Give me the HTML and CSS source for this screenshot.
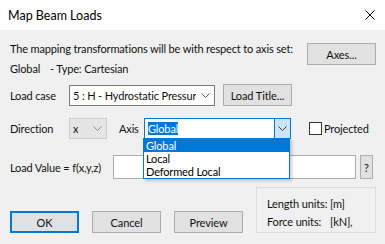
FILE: index.html
```html
<!DOCTYPE html>
<html>
<head>
<meta charset="utf-8">
<link rel="stylesheet" href="styles.css">
</head>
<body>
<div class="dialog">
  <div class="titlebar">
    <span class="title">Map Beam Loads</span>
    <svg class="close" width="10" height="10" viewBox="0 0 10 10"><path d="M0.5 0.5 L9.5 9.5 M9.5 0.5 L0.5 9.5" stroke="#000" stroke-width="1" fill="none"/></svg>
  </div>
  <div class="content">
    <div class="axis-row">
      <div class="axis-text">
        <div>The mapping transformations will be with respect to axis set:</div>
        <div><span class="gl">Global</span>- Type: Cartesian</div>
      </div>
      <button class="btn axes">Axes...</button>
    </div>
    <div class="row lc-row">
      <span class="label lbl-w">Load case</span>
      <div class="combo lc-combo">
        <span class="combo-text">5 : H - Hydrostatic Pressur</span>
        <svg class="chev" width="9" height="5" viewBox="0 0 9 5"><polyline points="0.5,0.5 4.5,4.5 8.5,0.5" fill="none" stroke="#606060" stroke-width="1"/></svg>
      </div>
      <button class="btn title-btn">Load Title...</button>
    </div>
    <div class="row dir-row">
      <span class="label lbl-w">Direction</span>
      <div class="combo dir-combo">
        <span class="combo-text">x</span>
        <svg class="chev" width="9" height="5" viewBox="0 0 9 5"><polyline points="0.5,0.5 4.5,4.5 8.5,0.5" fill="none" stroke="#888" stroke-width="1"/></svg>
      </div>
      <span class="label axis-lbl">Axis</span>
      <div class="axis-wrap">
        <div class="combo axis-combo">
          <span class="combo-text"><span class="sel">Global</span></span>
          <span class="drop-btn">
            <svg width="9" height="5" viewBox="0 0 9 5"><polyline points="0.5,0.5 4.5,4.5 8.5,0.5" fill="none" stroke="#404040" stroke-width="1"/></svg>
          </span>
        </div>
        <ul class="dropdown">
          <li class="active">Global</li>
          <li>Local</li>
          <li>Deformed Local</li>
        </ul>
      </div>
      <label class="check"><span class="box"></span>Projected</label>
    </div>
    <div class="row lv-row">
      <span class="label lv-lbl">Load Value = f(x,y,z)</span>
      <div class="input"></div>
      <button class="btn q">?</button>
    </div>
    <div class="row bottom-row">
      <div class="buttons">
        <button class="btn ok">OK</button>
        <button class="btn">Cancel</button>
        <button class="btn">Preview</button>
      </div>
      <div class="units">
        <div><span class="u-lbl">Length units:</span>[m]</div>
        <div><span class="u-lbl">Force units:</span>[kN],</div>
      </div>
    </div>
  </div>
</div>
</body>
</html>
```

FILE: styles.css
```css
* { box-sizing: border-box; }
html, body { margin: 0; padding: 0; }
body {
  width: 385px;
  height: 244px;
  background: #f0f0f0;
  font-family: Lato, "Noto Sans", sans-serif;
  font-size: 11px;
  letter-spacing: -0.15px;
  color: #111;
  overflow: hidden;
  white-space: nowrap;
}
.dialog { width: 385px; height: 244px; }
.titlebar {
  height: 30px;
  background: #ffffff;
  display: flex;
  align-items: center;
  justify-content: space-between;
  padding: 0 10px 0 8px;
}
.title { font-size: 12.5px; letter-spacing: 0; color: #000; }
.close { display: block; }
.content { padding: 9px 9px 0 10px; }
.axis-row { display: flex; justify-content: space-between; align-items: flex-start; }
.axis-text { line-height: 20px; }
.gl { display: inline-block; width: 40px; }
.btn {
  font-family: inherit;
  font-size: 11px;
  letter-spacing: -0.1px;
  color: #111;
  background: #e1e1e1;
  border: 1px solid #adadad;
  width: 69px;
  height: 22px;
  padding: 0;
  margin: 0;
}
.axes { margin-top: 4px; }
.row { display: flex; align-items: center; }
.lc-row { margin-top: 5px; }
.lbl-w { width: 59px; }
.combo {
  position: relative;
  height: 21px;
  background: #fff;
  border: 1px solid #7a7a7a;
  display: flex;
  align-items: center;
}
.combo-text { padding-left: 3px; overflow: hidden; }
.chev { position: absolute; right: 4px; top: 7px; }
.lc-combo { width: 146px; }
.title-btn { margin-left: 8px; }
.dir-row { margin-top: 12px; }
.dir-combo { width: 38px; background: #e5e5e5; border-color: #cccccc; }
.dir-combo .combo-text { padding-left: 3px; }
.axis-lbl { margin-left: 12px; width: 25px; }
.axis-wrap { position: relative; }
.axis-combo { width: 147px; border-color: #0078d7; }
.axis-combo .combo-text { padding-left: 3px; }
.sel { background: #0078d7; color: #fff; line-height: 13px; display: inline-block; }
.drop-btn {
  position: absolute;
  right: 0;
  top: 0;
  width: 16px;
  height: 19px;
  background: #cce4f7;
  border-left: 1px solid #0078d7;
  display: flex;
  align-items: center;
  justify-content: center;
}
.drop-btn svg { display: block; }
.dropdown {
  position: absolute;
  left: -1px;
  top: 20px;
  width: 147px;
  margin: 0;
  padding: 0;
  list-style: none;
  background: #fff;
  border: 1px solid #0078d7;
  box-shadow: 2px 2px 3px rgba(0,0,0,0.2);
  z-index: 2;
}
.dropdown li { height: 13px; line-height: 13px; padding-left: 2px; color: #000; overflow: hidden; }
.dropdown li.active { background: #0078d7; color: #fff; }
.check { display: flex; align-items: center; margin-left: 18px; }
.box {
  width: 13px;
  height: 13px;
  border: 1px solid #333;
  background: #fff;
  margin-right: 2px;
}
.lv-row { margin-top: 16px; }
.lv-lbl { width: 103px; }
.input {
  width: 243px;
  height: 24px;
  background: #fff;
  border: 1px solid #abadb3;
}
.q { width: 13px; height: 24px; margin-left: 4px; }
.bottom-row { margin-top: 8px; align-items: flex-end; }
.buttons { display: flex; gap: 13px; width: 246px; }
.ok { border: 2px solid #0078d7; }
.units {
  width: 120px;
  height: 46px;
  border: 1px solid #dcdcdc;
  padding: 7px 0 0 10px;
  line-height: 18px;
}
.u-lbl { display: inline-block; width: 61px; margin-right: 2px; }
```
